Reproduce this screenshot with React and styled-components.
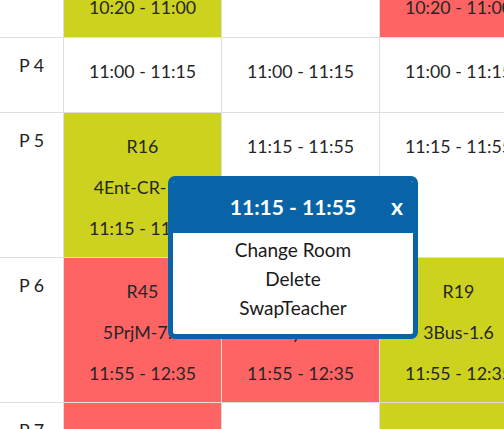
import React from "react";
import styled, { createGlobalStyle } from "styled-components";

const Global = createGlobalStyle`
  html, body { margin: 0; padding: 0; background: #fff; overflow: hidden; }
  body { font-family: Lato, "Open Sans", sans-serif; color: #222; }
`;

const COLORS = { yellow: "#cdd21f", red: "#ff6464", white: "#ffffff" };

const Page = styled.div`
  position: relative;
  width: 504px;
  height: 429px;
  overflow: hidden;
`;

const Grid = styled.div`
  display: grid;
  grid-template-columns: 64px 158px 158px 158px;
  grid-template-rows: 38px 75px 145px 145px 60px;
  width: 538px;
`;

const Cell = styled.div`
  box-sizing: border-box;
  background: ${(p) => COLORS[p.$tone || "white"]};
  border-right: 1px solid #dedede;
  border-bottom: 1px solid #dedede;
  display: flex;
  flex-direction: column;
  align-items: center;
  justify-content: ${(p) => (p.$clip ? "flex-end" : "flex-start")};
  padding: ${(p) => (p.$clip ? "0 0 18px" : "21px 0 0")};
  gap: 17px;
  overflow: hidden;
  font-size: 17.8px;
  color: #262626;
`;

const Label = styled(Cell)`
  padding-top: ${(p) => (p.$clip ? "0" : "15px")};
  color: #222;
`;

const Line = styled.div`
  line-height: 24px;
  height: 24px;
  white-space: nowrap;
`;

const Popup = styled.div`
  position: absolute;
  left: 168px;
  top: 176px;
  width: 250px;
  height: 163px;
  box-sizing: border-box;
  border: 5px solid #0864a6;
  border-radius: 7px;
  background: #fff;
  display: flex;
  flex-direction: column;
  overflow: hidden;
`;

const Header = styled.div`
  position: relative;
  height: 52px;
  background: #0864a6;
  color: #fff;
  display: flex;
  align-items: center;
  justify-content: center;
  font-weight: 700;
  font-size: 21px;
  padding-bottom: 1px;
  box-sizing: border-box;
`;

const Close = styled.span`
  position: absolute;
  right: 10px;
  top: 13px;
  font-size: 23px;
  font-weight: 700;
  line-height: 24px;
`;

const Menu = styled.div`
  display: flex;
  flex-direction: column;
  align-items: center;
  padding-top: 2px;
`;

const Item = styled.div`
  line-height: 29px;
  font-size: 19px;
  color: #1a1a1a;
`;

const rows = [
  { label: "", clip: true, cells: [
    { tone: "yellow", lines: ["10:20 - 11:00"] },
    { tone: "white", lines: [] },
    { tone: "red", lines: ["10:20 - 11:00"] },
  ]},
  { label: "P 4", cells: [
    { tone: "white", lines: ["11:00 - 11:15"] },
    { tone: "white", lines: ["11:00 - 11:15"] },
    { tone: "white", lines: ["11:00 - 11:15"] },
  ]},
  { label: "P 5", cells: [
    { tone: "yellow", lines: ["R16", "4Ent-CR-1.2", "11:15 - 11:55"] },
    { tone: "white", lines: ["11:15 - 11:55"] },
    { tone: "white", lines: ["11:15 - 11:55"] },
  ]},
  { label: "P 6", cells: [
    { tone: "red", lines: ["R45", "5PrjM-7.1", "11:55 - 12:35"] },
    { tone: "red", lines: ["R45", "5Gy-2.3", "11:55 - 12:35"] },
    { tone: "yellow", lines: ["R19", "3Bus-1.6", "11:55 - 12:35"] },
  ]},
  { label: "P 7", cells: [
    { tone: "red", lines: [] },
    { tone: "white", lines: [] },
    { tone: "yellow", lines: [] },
  ]},
];

export default function App() {
  return (
    <>
      <Global />
      <Page>
        <Grid>
          {rows.map((r, i) => (
            <React.Fragment key={i}>
              <Label $clip={r.clip}>{r.label && <Line>{r.label}</Line>}</Label>
              {r.cells.map((c, j) => (
                <Cell key={j} $tone={c.tone} $clip={r.clip}>
                  {c.lines.map((l, k) => (
                    <Line key={k}>{l}</Line>
                  ))}
                </Cell>
              ))}
            </React.Fragment>
          ))}
        </Grid>
        <Popup>
          <Header>
            11:15 - 11:55
            <Close>x</Close>
          </Header>
          <Menu>
            <Item>Change Room</Item>
            <Item>Delete</Item>
            <Item>SwapTeacher</Item>
          </Menu>
        </Popup>
      </Page>
    </>
  );
}
